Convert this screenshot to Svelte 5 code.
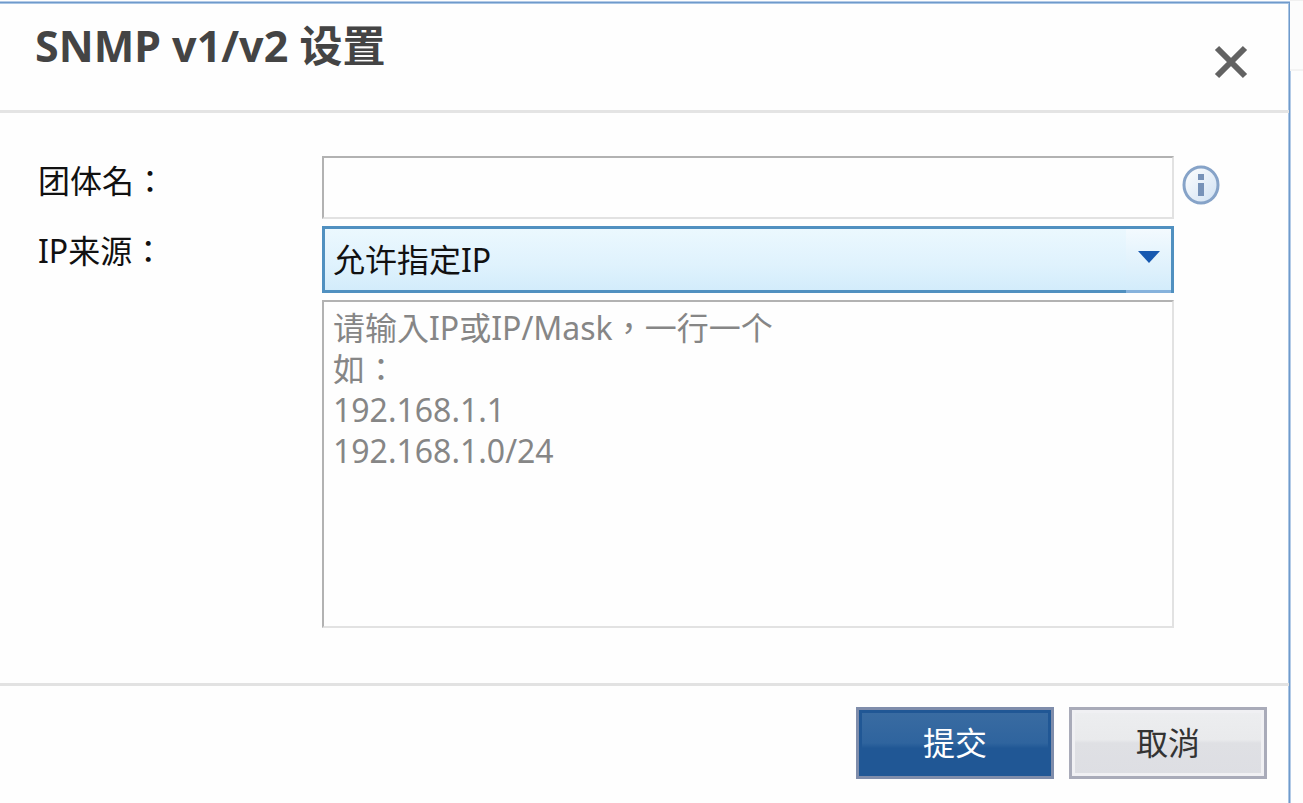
<script>
  let community = $state('');
  let source = $state('custom');
  let addresses = $state('');

  const hint = '请输入IP或IP/Mask，一行一个\n如：\n192.168.1.1\n192.168.1.0/24';
</script>

<div class="page">
  <form class="dialog" onsubmit={(e) => e.preventDefault()}>
    <header>
      <h1>SNMP v1/v2 设置</h1>
      <button type="button" class="close" aria-label="关闭">
        <svg viewBox="0 0 36 36" width="36" height="36">
          <path d="M4 4L32 32M32 4L4 32" stroke="#626262" stroke-width="6" fill="none" />
        </svg>
      </button>
    </header>

    <div class="fields">
      <label class="name" for="community">团体名：</label>
      <input id="community" type="text" bind:value={community} />
      <svg class="info" viewBox="0 0 38 40" width="38" height="40" aria-hidden="true">
        <defs>
          <linearGradient id="disc" x1="0" y1="0" x2="1" y2="1">
            <stop offset="0" stop-color="#ffffff" />
            <stop offset="1" stop-color="#cfe0f2" />
          </linearGradient>
        </defs>
        <ellipse cx="19" cy="20" rx="17" ry="18" fill="url(#disc)" stroke="#86a3c8" stroke-width="3" />
        <rect x="16" y="9" width="6" height="6" fill="#7792b8" />
        <rect x="16" y="18" width="6" height="13" fill="#7792b8" />
      </svg>

      <label class="name" for="source">IP来源：</label>
      <div class="combo">
        <select id="source" bind:value={source}>
          <option value="custom">允许指定IP</option>
          <option value="all">允许所有IP</option>
        </select>
        <span class="trigger">
          <svg viewBox="0 0 22 12" width="22" height="12"><path d="M0 0H22L11 12Z" fill="#1759b0" /></svg>
        </span>
      </div>

      <textarea aria-label="IP" placeholder={hint} bind:value={addresses}></textarea>
    </div>

    <footer>
      <button type="submit" class="btn primary">提交</button>
      <button type="button" class="btn">取消</button>
    </footer>
  </form>
  <div class="behind"></div>
</div>

<style>
  :global(body) {
    background: #fefefe;
    overflow: hidden;
  }

  .page {
    display: flex;
    min-height: 100vh;
    box-sizing: border-box;
    font: 32px/41px "Noto Sans", "Noto Sans CJK TC", sans-serif;
    color: #111;
  }

  .dialog {
    flex: 1;
    margin-top: 2px;
    border-top: 1px solid #6f9acb;
    border-right: 1px solid #6f9acb;
    box-shadow: 0 0 0 1px #b4cbe7, inset -1px 1px #a9c5e4;
  }

  .behind {
    width: 13px;
    height: 68px;
    border-top: 1px solid #f0f0f0;
    border-bottom: 2px solid #f3f3f3;
    background: #fcfcfc;
  }

  header {
    display: flex;
    justify-content: space-between;
    align-items: flex-start;
    height: 110px;
    padding: 0 40px 0 35px;
    border-bottom: 3px solid #e4e4e4;
    box-sizing: border-box;
  }

  h1 {
    margin: 15px 0 0;
    font-size: 43px;
    line-height: 56px;
    font-weight: 700;
    color: #444;
  }

  button {
    font: inherit;
    cursor: pointer;
  }

  .close {
    display: flex;
    margin-top: 41px;
    padding: 0;
    border: 0;
    background: none;
  }

  .fields {
    display: grid;
    grid-template-columns: 284px 1fr 46px;
    row-gap: 7px;
    padding: 43px 69px 55px 38px;
  }

  .name {
    padding-top: 4px;
  }

  input,
  select,
  textarea {
    display: block;
    width: 100%;
    box-sizing: border-box;
    margin: 0;
    border-radius: 0;
    font: inherit;
    outline: none;
  }

  input,
  textarea {
    border: 2px solid;
    border-color: #b2b2b2 #e2e2e2 #e2e2e2 #b2b2b2;
    background: #fefefe;
    padding: 5px 9px;
  }

  input {
    height: 63px;
  }

  .info {
    margin: 9px 0 0 8px;
  }

  .combo {
    position: relative;
  }

  select {
    height: 67px;
    padding: 0 60px 0 8px;
    appearance: none;
    border: 3px solid #5090c0;
    background: linear-gradient(#ebf8fe, #dff2fd 60%, #d3ecfb);
    color: #111;
  }

  /* sits over the right end of the select */
  .trigger {
    position: absolute;
    top: 3px;
    right: 3px;
    bottom: 0;
    width: 45px;
    display: flex;
    align-items: center;
    justify-content: center;
    padding-bottom: 6px;
    box-sizing: border-box;
    border-bottom: 3px solid #86b2dc;
    background: linear-gradient(#f3fafe, #d3ecfb);
    pointer-events: none;
  }

  textarea {
    grid-column: 2;
    height: 328px;
    resize: none;
  }

  textarea::placeholder {
    color: #868686;
  }

  footer {
    display: flex;
    justify-content: flex-end;
    gap: 15px;
    padding: 21px 22px 24px;
    border-top: 3px solid #e2e2e2;
  }

  .btn {
    width: 198px;
    height: 72px;
    padding: 0 0 2px;
    border: 3px solid #a9abb9;
    background: linear-gradient(#edeef0, #e9eaec 45%, #dfe0e4 50%, #dddee3);
    box-shadow: inset 0 0 0 3px #f0f0f3;
    color: #333;
  }

  .primary {
    border-color: #7f8dab;
    background: linear-gradient(#3a6ca2, #2f649e 50%, #205795 58%, #205795);
    box-shadow: inset 0 0 0 3px #205795;
    color: #fff;
  }
</style>
